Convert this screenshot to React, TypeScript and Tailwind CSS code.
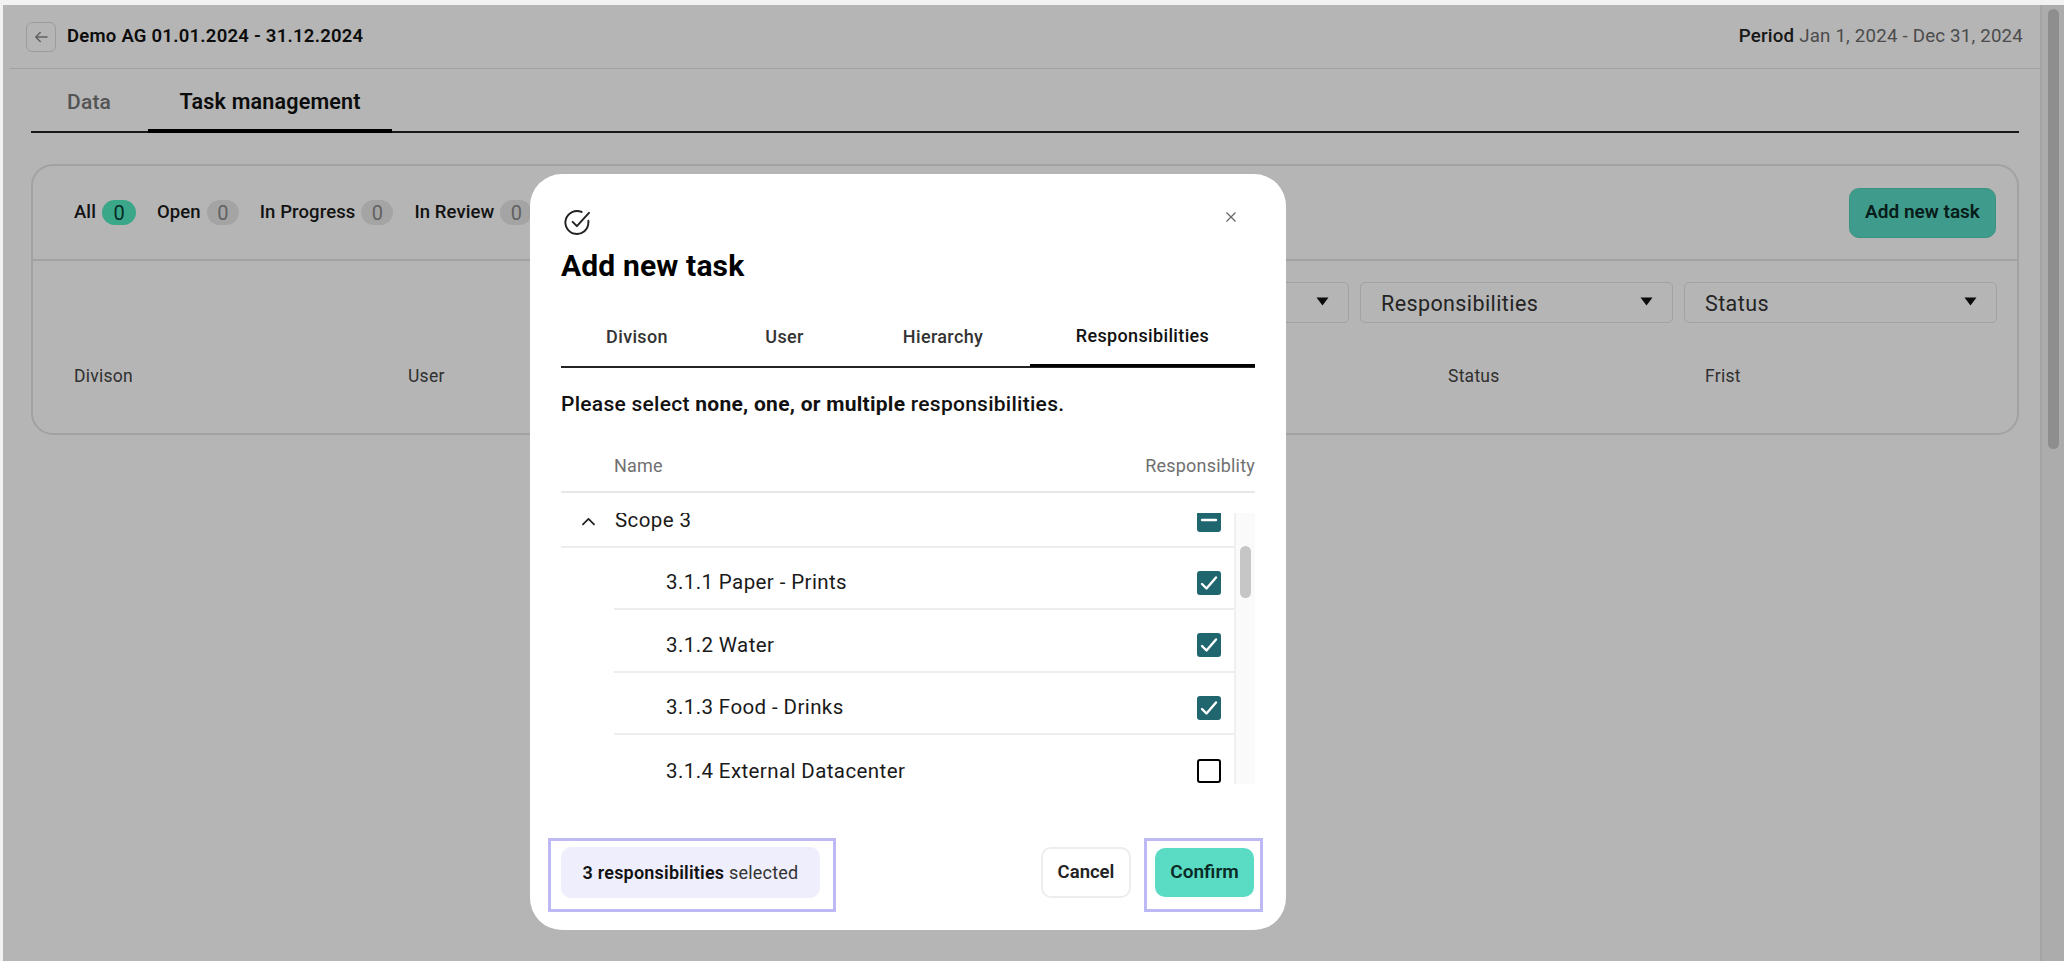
import React from "react";

const font = { fontFamily: "Roboto, 'Noto Sans', sans-serif" };

function Pill({ label, active }: { label: string; active?: boolean }) {
  return (
    <div className="flex items-center gap-[6px]">
      <span className="pt-[1px] text-[18.5px] font-medium tracking-[0.1px] text-[#1a1a1a]">{label}</span>
      <span
        className={
          active
            ? "flex h-[25px] w-[34px] items-center justify-center rounded-full bg-[#52ebc0] text-[20px] text-[#0b3a34]"
            : "flex h-[25px] w-[32px] items-center justify-center rounded-full bg-[#e8e8e8] text-[20px] text-[#8a8a8a]"
        }
      >
        0
      </span>
    </div>
  );
}

function FilterSelect({ label }: { label: string }) {
  return (
    <div className="flex h-[41px] w-[313px] items-center justify-between rounded-[5px] border border-[#e4e4e4] pl-[20px] pr-[19px]">
      <span className="pt-[4px] text-[21.5px] tracking-[0.4px] text-[#333]">{label}</span>
      <svg width="13" height="9" viewBox="0 0 13 9" className="-mt-[3px]">
        <path d="M0.5 0.5h12L6.5 8.5z" fill="#111" />
      </svg>
    </div>
  );
}

function Box({ state }: { state: "checked" | "empty" | "mixed" }) {
  if (state === "empty") {
    return <div className="h-[24px] w-[24px] rounded-[3px] border-[2.5px] border-black bg-white" />;
  }
  return (
    <div className="flex h-[24px] w-[24px] items-center justify-center rounded-[3px] bg-[#20666e]">
      <svg width="20" height="20" viewBox="0 0 20 20" fill="none" stroke="white" strokeWidth="2.4" strokeLinecap="round" strokeLinejoin="round">
        {state === "checked" ? <path d="M3 11l4.5 4.5L17 4.5" /> : <path d="M3 10h14" />}
      </svg>
    </div>
  );
}

function Row({ label, state, last }: { label: string; state: "checked" | "empty"; last?: boolean }) {
  return (
    <div className={"ml-[53px] flex h-[62.5px] items-center justify-between pl-[52px] pr-[13px] pt-[10px] " + (last ? "" : "border-b-2 border-[#ededed]")}>
      <span className="text-[20.5px] tracking-[0.4px] text-[#1a1a1a]">{label}</span>
      <Box state={state} />
    </div>
  );
}

function ModalTab({ label, active, width }: { label: string; active?: boolean; width: string }) {
  return (
    <div
      className={
        width +
        " flex h-[53px] items-center justify-center pb-[8px] text-[18px] font-medium tracking-[0.35px] " +
        (active ? "-mb-[1px] border-b-[3px] border-black text-[#111]" : "text-[#333]")
      }
    >
      {label}
    </div>
  );
}

export default function App() {
  return (
    <div className="relative h-[961px] w-[2064px] overflow-hidden bg-[#f2f2f2] pl-[3px] pt-[5px]" style={font}>
      <div className="flex h-[956px]">
        {/* page */}
        <div className="h-full w-[2037px] bg-white">
          <div className="ml-[7px] flex h-[64px] items-center justify-between border-b border-[#e3e3e3] pl-[16px] pr-[17px]">
            <div className="flex items-center gap-[11px]">
              <div className="flex h-[30px] w-[30px] items-center justify-center rounded-[6px] border border-[#dcdcdc]">
                <svg width="18" height="18" viewBox="0 0 24 24" fill="none" stroke="#8a8a8a" strokeWidth="2" strokeLinecap="round" strokeLinejoin="round">
                  <path d="M20 12H5M11 6l-6 6 6 6" />
                </svg>
              </div>
              <span className="text-[18.5px] font-semibold tracking-[0.25px] text-[#111]">Demo AG 01.01.2024 - 31.12.2024</span>
            </div>
            <div className="text-[18.7px] tracking-[0.2px] text-[#6b6b6b]">
              <span className="font-medium text-[#222]">Period</span> Jan 1, 2024 - Dec 31, 2024
            </div>
          </div>

          <div className="ml-[28px] mr-[21px] flex h-[64px] items-stretch border-b-2 border-[#222]">
            <div className="flex items-center pl-[36px] pr-[37px] pt-[6px] text-[21px] font-medium tracking-[0.2px] text-[#777]">Data</div>
            <div className="-mb-[2px] flex w-[244px] items-center justify-center border-b-4 border-black pt-[6px] text-[21.5px] font-semibold tracking-[0.2px] text-[#111]">Task management</div>
          </div>

          <div className="ml-[28px] mr-[21px] mt-[31px] h-[271px] rounded-[22px] border-2 border-[#e4e4e4]">
            <div className="flex h-[95px] items-center justify-between border-b-2 border-[#e4e4e4] pl-[41px] pr-[21px]">
              <div className="flex items-center gap-[21px]">
                <Pill label="All" active />
                <Pill label="Open" />
                <Pill label="In Progress" />
                <Pill label="In Review" />
              </div>
              <div className="flex h-[50px] w-[147px] items-center justify-center rounded-[10px] border border-[#4fd0b6] bg-[#5adbc4] text-[19px] font-semibold text-[#0a2a26]">
                Add new task
              </div>
            </div>
            <div className="flex justify-end gap-[11px] pr-[20px] pt-[21px]">
              <FilterSelect label="Hierarchy" />
              <FilterSelect label="Responsibilities" />
              <FilterSelect label="Status" />
            </div>
            <div className="flex pl-[41px] pt-[40px] text-[17.5px] tracking-[0.25px] text-[#444]">
              <div className="w-[334px]">Divison</div>
              <div className="w-[1040px]">User</div>
              <div className="w-[257px]">Status</div>
              <div>Frist</div>
            </div>
          </div>
        </div>
        {/* page scrollbar */}
        <div className="flex h-full flex-1 justify-center border-l-2 border-[#e8e8e8] pl-[1px] pt-[4px]">
          <div className="h-[440px] w-[11px] rounded-full bg-[#c8c8c8]" />
        </div>
      </div>

      {/* dim layer */}
      <div className="absolute bottom-0 left-[3px] right-0 top-[5px] bg-black/[0.29]">
        <div className="absolute left-[527px] top-[169px] h-[756px] w-[756px] rounded-[32px] bg-white px-[31px] pt-[34px]">
          <svg width="29" height="29" viewBox="0 0 24 24" fill="none" stroke="#222" strokeWidth="1.6" strokeLinecap="round" strokeLinejoin="round" className="ml-[2px]">
            <path d="M21 10.5V12a9.5 9.5 0 1 1-5.6-8.7" />
            <path d="M8 11.5l3.5 3.5L21.5 4" />
          </svg>
          <div className="absolute right-[49px] top-[37px]">
            <svg width="12" height="12" viewBox="0 0 12 12" fill="none" stroke="#666" strokeWidth="1.2">
              <path d="M1.5 1.5l9 9M10.5 1.5l-9 9" />
            </svg>
          </div>

          <div className="mt-[11px] text-[30px] font-bold leading-[36px] tracking-[0.15px] text-black">Add new task</div>

          <div className="mt-[30px] flex h-[54px] border-b-2 border-[#222]">
            <ModalTab label="Divison" width="w-[152px]" />
            <ModalTab label="User" width="w-[143px]" />
            <ModalTab label="Hierarchy" width="w-[174px]" />
            <ModalTab label="Responsibilities" active width="w-[225px]" />
          </div>

          <div className="mt-[22px] text-[21px] font-medium leading-[28px] tracking-[0.27px] text-[#111]">
            Please select <span className="font-bold">none, one, or multiple</span> responsibilities.
          </div>

          <div className="mt-[23px] flex h-[52px] items-center justify-between border-b-2 border-[#e8e8e8] pb-[2px] pl-[53px] text-[18px] tracking-[0.2px] text-[#707070]">
            <span>Name</span>
            <span>Responsiblity</span>
          </div>

          <div className="mt-[20px] flex h-[271px] overflow-hidden">
            <div className="w-[675px] border-r-2 border-[#f0f0f0]">
              <div className="-mt-[28px] flex h-[62.5px] items-center justify-between border-b-2 border-[#ededed] pl-[18px] pr-[13px] pt-[10px]">
                <div className="flex items-center gap-[17px]">
                  <svg width="19" height="19" viewBox="0 0 24 24" fill="none" stroke="#222" strokeWidth="2.2" strokeLinecap="round" strokeLinejoin="round">
                    <path d="M5 17l7-7 7 7" />
                  </svg>
                  <span className="text-[20.5px] tracking-[0.4px] text-[#1a1a1a]">Scope 3</span>
                </div>
                <Box state="mixed" />
              </div>
              <Row label="3.1.1 Paper - Prints" state="checked" />
              <Row label="3.1.2 Water" state="checked" />
              <Row label="3.1.3 Food - Drinks" state="checked" />
              <Row label="3.1.4 External Datacenter" state="empty" last />
            </div>
            <div className="flex flex-1 justify-center bg-[#fafafa] pt-[33px]">
              <div className="h-[52px] w-[11px] rounded-full bg-[#c6c6c6]" />
            </div>
          </div>

          <div className="mt-[54px] flex items-start justify-between">
            <div className="-ml-[13px] border-[3px] border-[#bdb9f5] pb-[11px] pl-[10px] pr-[13px] pt-[6px]">
              <div className="flex h-[51px] w-[259px] items-center justify-center rounded-[10px] bg-[#eeeefc] text-[18px] tracking-[0.2px] text-[#333]">
                <span className="font-semibold text-[#111]">3 responsibilities</span>&nbsp;selected
              </div>
            </div>
            <div className="-mr-[8px] flex items-start">
              <div className="mr-[13px] mt-[9px] flex h-[51px] w-[90px] items-center justify-center rounded-[10px] border-2 border-[#ededed] text-[18.5px] font-semibold text-[#222]">
                Cancel
              </div>
              <div className="border-[3px] border-[#bdb9f5] pb-[12px] pl-[8px] pr-[6px] pt-[7px]">
                <div className="flex h-[49px] w-[99px] items-center justify-center rounded-[10px] bg-[#5adbc4] text-[19px] font-semibold text-[#0a2a26]">
                  Confirm
                </div>
              </div>
            </div>
          </div>
        </div>
      </div>
    </div>
  );
}
